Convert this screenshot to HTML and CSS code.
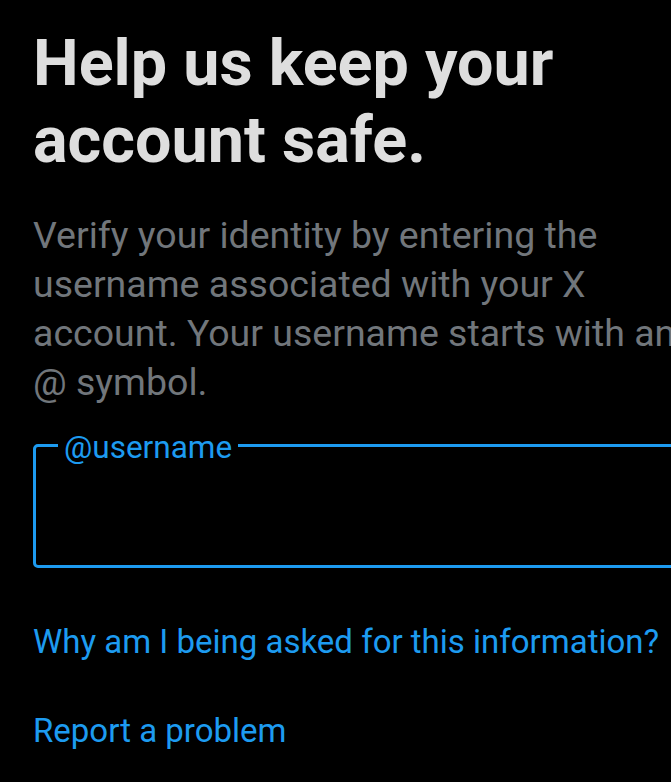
FILE: index.html
```html
<!DOCTYPE html>
<html lang="en">
<head>
<meta charset="utf-8">
<title>Help us keep your account safe.</title>
<link rel="stylesheet" href="styles.css">
</head>
<body>
<main class="page">
  <h1 class="title">Help us keep your account safe.</h1>
  <p class="desc">Verify your identity by entering the username associated with your X account. Your username starts with an @ symbol.</p>
  <div class="field">
    <span class="field-label">@username</span>
  </div>
  <a class="link link-why" href="#">Why am I being asked for this information?</a>
  <a class="link link-report" href="#">Report a problem</a>
</main>
</body>
</html>
```
FILE: styles.css
```css
html, body {
  margin: 0;
  padding: 0;
  background: #000;
  overflow: hidden;
}
body {
  width: 671px;
  height: 782px;
  font-family: Roboto, "Noto Sans", sans-serif;
}
.page {
  width: 690px;
  padding: 25px 0 0 33px;
  display: flex;
  flex-direction: column;
  align-items: flex-start;
}
.title {
  margin: 0;
  font-size: 64.7px;
  line-height: 77px;
  font-weight: 700;
  color: #dedede;
  width: 600px;
}
.desc {
  margin: 32px 0 0;
  font-size: 37.5px;
  line-height: 49px;
  color: #71767b;
  width: 652px;
}
.field {
  position: relative;
  box-sizing: border-box;
  margin-top: 37px;
  width: 690px;
  height: 124px;
  border: 3px solid #1d9bf0;
  border-radius: 5px;
}
.field-label {
  position: absolute;
  left: 22px;
  top: -19px;
  padding: 0 6px;
  background: #000;
  font-size: 31.5px;
  line-height: 40px;
  color: #1d9bf0;
}
.link {
  color: #1d9bf0;
  text-decoration: none;
  font-size: 33px;
  line-height: 40px;
}
.link-why {
  margin-top: 54px;
}
.link-report {
  margin-top: 49px;
}
```
